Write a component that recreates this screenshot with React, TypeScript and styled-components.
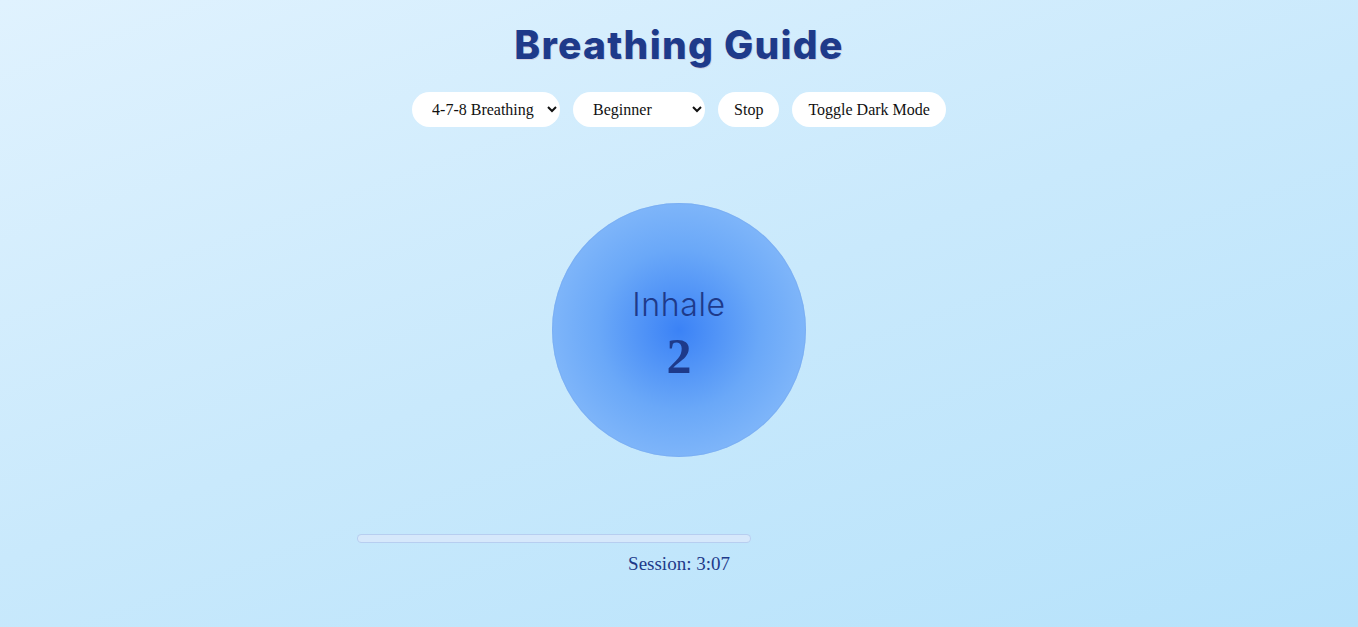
import React from "react";
import styled, { createGlobalStyle } from "styled-components";

const Global = createGlobalStyle`
  html, body { margin: 0; padding: 0; }
  body {
    min-height: 100vh;
    background: linear-gradient(160deg, #e0f2fe 0%, #c9e9fc 50%, #b6e2fb 100%);
    font-family: "Liberation Serif", "DejaVu Serif", serif;
    color: #1e3a8a;
  }
`;

const Page = styled.div`
  min-height: 627px;
  display: flex;
  flex-direction: column;
  align-items: center;
  padding-top: 21px;
  box-sizing: border-box;
`;

const Title = styled.h1`
  margin: 0;
  font-family: "Inter", "Noto Sans", sans-serif;
  font-weight: 800;
  font-size: 39px;
  line-height: 48px;
  letter-spacing: 1.25px;
  color: #1e3a8a;
  text-shadow: 1px 1px 0 rgba(190, 60, 90, 0.18);
`;

const Controls = styled.div`
  display: flex;
  gap: 13px;
  margin-top: 23px;
`;

const Select = styled.select<{ $w: number }>`
  width: ${(p) => p.$w}px;
  height: 35px;
  border: none;
  border-radius: 18px;
  background: #fff;
  padding: 0 6px 0 16px;
  font-family: "Liberation Serif", serif;
  font-size: 16px;
  color: #111;
  outline: none;
`;

const Button = styled.button`
  height: 35px;
  border: none;
  border-radius: 18px;
  background: #fff;
  padding: 0 16px;
  font-family: "Liberation Serif", serif;
  font-size: 16px;
  color: #111;
  cursor: pointer;
`;

const Circle = styled.div`
  margin-top: 76px;
  width: 254px;
  height: 254px;
  border-radius: 50%;
  background: radial-gradient(circle at center, #3b82f6 0%, #6aa8f8 45%, #95c4fb 100%);
  box-shadow: inset 0 0 0 1px rgba(120, 170, 240, 0.5);
  display: flex;
  flex-direction: column;
  align-items: center;
  justify-content: center;
  gap: 3px;
`;

const Phase = styled.div`
  font-family: "Inter", "Noto Sans", sans-serif;
  font-weight: 300;
  font-size: 32px;
  line-height: 40px;
  letter-spacing: 0.6px;
  color: #1e3a8a;
  margin-top: 9px;
`;

const Count = styled.div`
  font-family: "Liberation Serif", serif;
  font-weight: 700;
  font-size: 50px;
  line-height: 56px;
  color: #1e3a8a;
`;

const Footer = styled.div`
  width: 644px;
  margin-top: 77px;
  display: flex;
  flex-direction: column;
`;

const Track = styled.div`
  width: 394px;
  height: 9px;
  border-radius: 5px;
  background: #d6e8fb;
  box-shadow: inset 0 0 0 1px rgba(170, 195, 235, 0.7);
`;

const Session = styled.div`
  align-self: center;
  margin-top: 10px;
  font-family: "Liberation Serif", serif;
  font-size: 19px;
  color: #1e3a8a;
`;

export default function App() {
  return (
    <>
      <Global />
      <Page>
        <Title>Breathing Guide</Title>
        <Controls>
          <Select $w={148} defaultValue="478">
            <option value="478">4-7-8 Breathing</option>
            <option value="box">Box Breathing</option>
          </Select>
          <Select $w={132} defaultValue="beg">
            <option value="beg">Beginner</option>
            <option value="adv">Advanced</option>
          </Select>
          <Button>Stop</Button>
          <Button>Toggle Dark Mode</Button>
        </Controls>
        <Circle>
          <Phase>Inhale</Phase>
          <Count>2</Count>
        </Circle>
        <Footer>
          <Track />
          <Session>Session: 3:07</Session>
        </Footer>
      </Page>
    </>
  );
}
